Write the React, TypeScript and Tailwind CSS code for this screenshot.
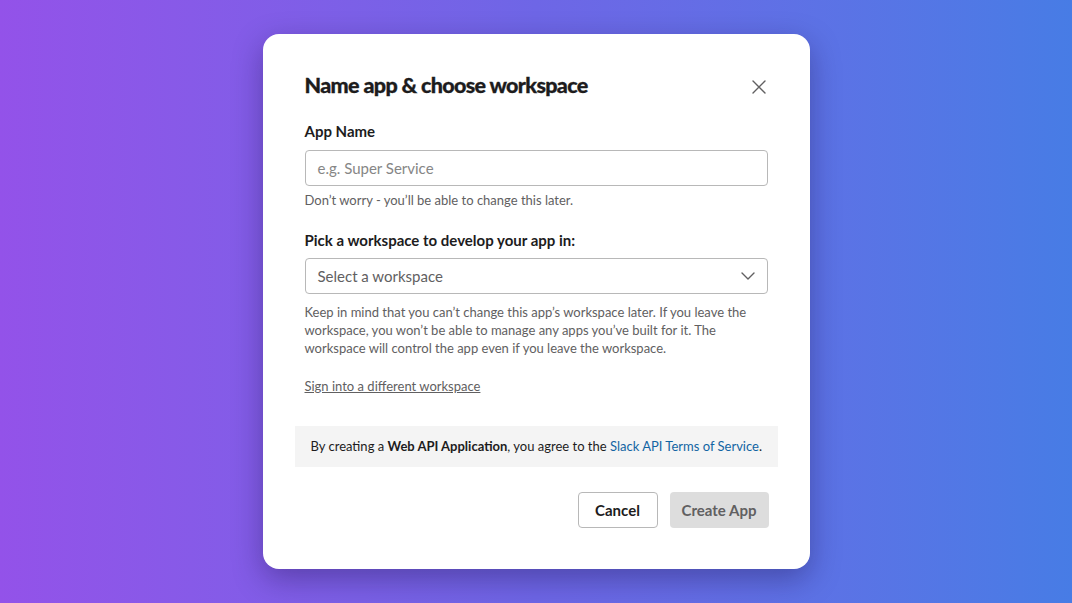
import React from 'react';

const App: React.FC = () => {
  return (
    <div
      className="w-full h-[603px] flex items-start justify-center bg-gradient-to-r from-[#9352e9] via-[#6e66e6] to-[#477ce5] pt-[34px]"
      style={{ fontFamily: 'Lato, "Noto Sans", sans-serif' }}
    >
      <div className="w-[547px] h-[535px] bg-white rounded-[16px] shadow-[0_10px_30px_rgba(20,10,60,0.35)] flex flex-col">
        {/* Header */}
        <div className="flex items-center justify-between pl-[42px] pr-[42px] pt-[37px]">
          <h1 className="text-[21.5px] leading-[28px] font-black text-[#1d1c1d] tracking-[-0.65px] [-webkit-text-stroke:0.3px_#1d1c1d]">
            Name app &amp; choose workspace
          </h1>
          <button className="w-[20px] h-[20px] flex items-center justify-center text-[#616061] mt-[4px] -mr-[1px]">
            <svg width="16" height="16" viewBox="0 0 16 16" fill="none" stroke="currentColor" strokeWidth="1.4" strokeLinecap="round">
              <path d="M2 2 L14 14 M14 2 L2 14" />
            </svg>
          </button>
        </div>

        {/* Body */}
        <div className="px-[42px] pt-[23px] flex flex-col">
          <label className="text-[15px] leading-[18px] font-bold text-[#1d1c1d]">App Name</label>
          <div className="mt-[10px] h-[36px] border border-[#b8b8b8] rounded-[4px] flex items-center px-[12px]">
            <span className="text-[15px] text-[#868686]">e.g. Super Service</span>
          </div>
          <p className="mt-[6px] text-[13px] leading-[16px] text-[#616061]">
            Don’t worry - you’ll be able to change this later.
          </p>

          <label className="mt-[23px] text-[15px] leading-[18px] font-bold text-[#1d1c1d]">
            Pick a workspace to develop your app in:
          </label>
          <div className="mt-[9px] h-[36px] border border-[#b8b8b8] rounded-[4px] flex items-center justify-between px-[12px]">
            <span className="text-[15px] text-[#616061]">Select a workspace</span>
            <svg width="16" height="16" viewBox="0 0 16 16" fill="none" stroke="#616061" strokeWidth="1.4" strokeLinecap="round" strokeLinejoin="round" className="mr-[-1px]">
              <path d="M2 5 L8 11 L14 5" />
            </svg>
          </div>
          <p className="mt-[9px] text-[13px] leading-[18px] text-[#616061]">
            Keep in mind that you can’t change this app’s workspace later. If you leave the workspace, you won’t be able to manage any apps you’ve built for it. The workspace will control the app even if you leave the workspace.
          </p>
          <a className="mt-[21px] text-[13px] leading-[16px] text-[#616061] underline self-start">
            Sign into a different workspace
          </a>
        </div>

        {/* Terms */}
        <div className="mx-[32px] mt-[32px] h-[41px] bg-[#f4f4f4] flex items-center px-[16px] pt-[1px]">
          <p className="text-[13px] text-[#1d1c1d] whitespace-nowrap">
            By creating a <span className="font-bold">Web API Application</span>, you agree to the{' '}
            <a className="text-[#1264a3]">Slack API Terms of Service</a>.
          </p>
        </div>

        {/* Footer */}
        <div className="flex justify-end gap-[12px] px-[41px] mt-[25px]">
          <button className="h-[36px] w-[80px] border border-[#b8b8b8] rounded-[4px] bg-white text-[15px] font-bold text-[#1d1c1d]">
            Cancel
          </button>
          <button className="h-[36px] w-[99px] rounded-[4px] bg-[#dddddd] text-[15px] font-bold text-[#616061]">
            Create App
          </button>
        </div>
      </div>
    </div>
  );
};

export default App;
